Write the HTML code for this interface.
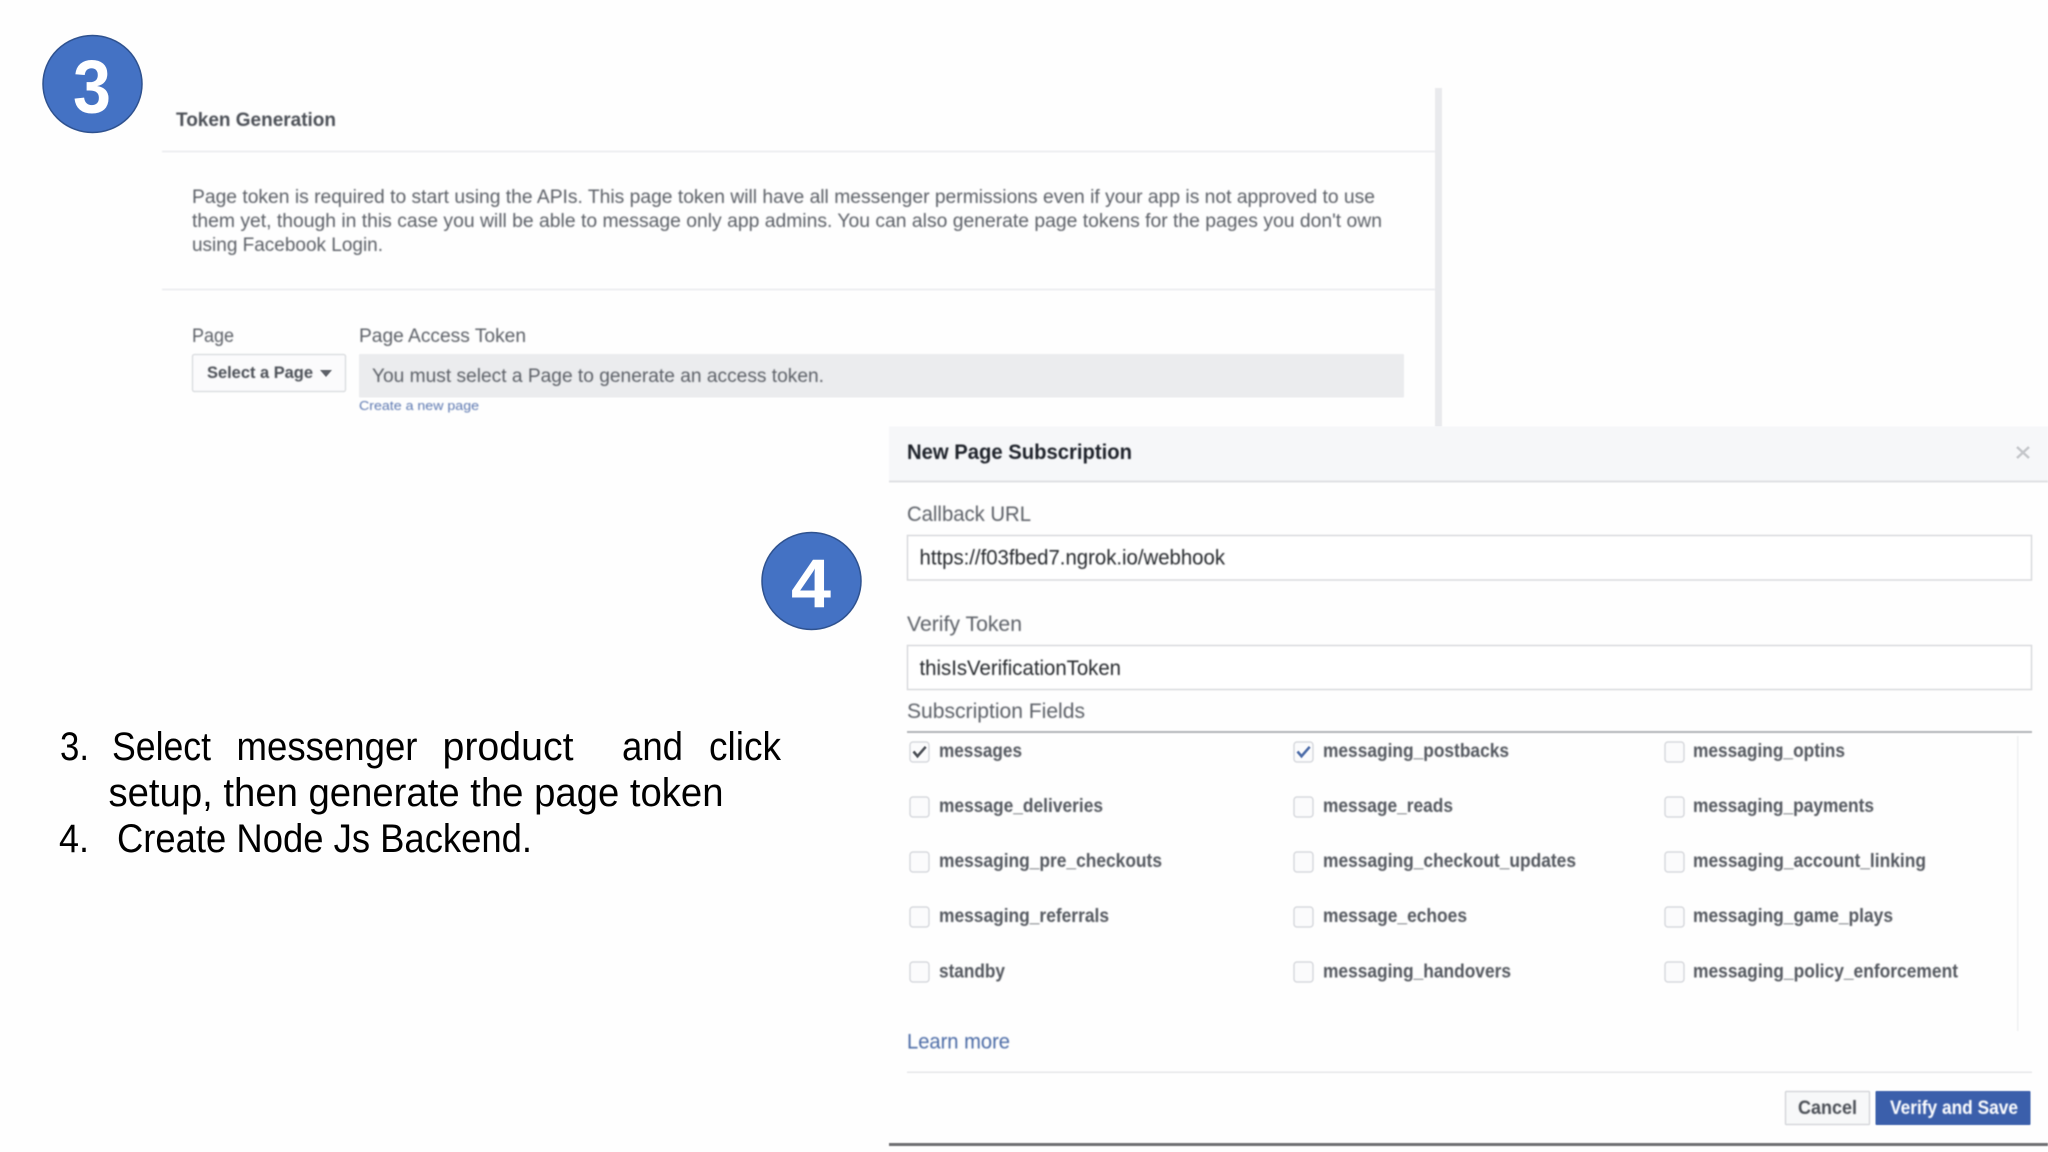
<!DOCTYPE html>
<html><head><meta charset="utf-8"><title>Token Generation and New Page Subscription</title>
<style>
html,body{margin:0;padding:0;background:#fefefe;width:2048px;height:1152px;overflow:hidden}
svg{display:block;font-family:"Liberation Sans",Arial,sans-serif}
.soft{filter:blur(.7px)}
.f18{font-size:19px;fill:#5c6067}
.b18{font-size:19px;font-weight:700;fill:#4b4f56}
.f20{font-size:21px;fill:#5c6067}
.inp{font-size:21px;fill:#25282c}
.fld{font-size:19px;font-weight:700;fill:#54585f}
.cb{fill:#fbfbfc;stroke:#d8dade;stroke-width:1.500}
.big{font-size:40px;fill:#000}
</style></head><body>
<svg width="2048" height="1152" viewBox="0 0 2048 1152" xmlns="http://www.w3.org/2000/svg">
<rect width="2048" height="1152" fill="#fefefe"/>

<!-- Token panel -->
<g style="filter:blur(.5px)">
<rect x="1435" y="88" width="7" height="339" fill="#e9eaed"/>
<rect x="162" y="150.500" width="1273" height="2" fill="#eeeff1"/>
<rect x="162" y="288.500" width="1273" height="2" fill="#eeeff1"/>
<rect x="192.500" y="354.500" width="153" height="37" rx="2" fill="#fbfbfc" stroke="#dddfe2" stroke-width="1.500"/>
<rect x="359" y="354" width="1045" height="43.500" rx="1" fill="#ebecee"/>
<path d="M320 370h12l-6 7z" fill="#5d6168"/>
</g>

<g class="soft">
<text x="176" y="126" class="b18" textLength="160" lengthAdjust="spacingAndGlyphs">Token Generation</text>
<text x="192" y="203" class="f18" textLength="1183" lengthAdjust="spacingAndGlyphs">Page token is required to start using the APIs. This page token will have all messenger permissions even if your app is not approved to use</text>
<text x="192" y="227" class="f18" textLength="1190" lengthAdjust="spacingAndGlyphs">them yet, though in this case you will be able to message only app admins. You can also generate page tokens for the pages you don't own</text>
<text x="192" y="251" class="f18" textLength="191" lengthAdjust="spacingAndGlyphs">using Facebook Login.</text>
<text x="192" y="342" class="f18" textLength="42" lengthAdjust="spacingAndGlyphs">Page</text>
<text x="359" y="342" class="f18" textLength="167" lengthAdjust="spacingAndGlyphs">Page Access Token</text>
<text x="207" y="378" class="b18" style="font-size:17px" textLength="106" lengthAdjust="spacingAndGlyphs">Select a Page</text>
<text x="372" y="382" class="f18" textLength="452" lengthAdjust="spacingAndGlyphs">You must select a Page to generate an access token.</text>
<text x="359" y="410" style="font-size:13px;fill:#5b77b0" textLength="120" lengthAdjust="spacingAndGlyphs">Create a new page</text>
</g>

<!-- Left copy -->
<g style="filter:blur(.3px)">
<text x="60" y="760" class="big" textLength="29" lengthAdjust="spacingAndGlyphs">3.</text>
<text x="112" y="760" class="big" textLength="99" lengthAdjust="spacingAndGlyphs">Select</text>
<text x="236.500" y="760" class="big" textLength="181" lengthAdjust="spacingAndGlyphs">messenger</text>
<text x="442.500" y="760" class="big" textLength="131" lengthAdjust="spacingAndGlyphs">product</text>
<text x="622" y="760" class="big" textLength="61" lengthAdjust="spacingAndGlyphs">and</text>
<text x="709" y="760" class="big" textLength="72" lengthAdjust="spacingAndGlyphs">click</text>
<text x="108.500" y="806" class="big" textLength="615" lengthAdjust="spacingAndGlyphs">setup, then generate the page token</text>
<text x="59" y="852" class="big" textLength="30" lengthAdjust="spacingAndGlyphs">4.</text>
<text x="117" y="852" class="big" textLength="415" lengthAdjust="spacingAndGlyphs">Create Node Js Backend.</text>
</g>

<!-- Modal -->
<rect x="889" y="426.500" width="1159" height="720" fill="#fefefe"/>
<g style="filter:blur(.5px)">
<rect x="889" y="426.500" width="1159" height="55" fill="#f6f7f9"/>
<rect x="889" y="480.500" width="1159" height="2" fill="#e0e1e4"/>
<rect x="889" y="1143" width="1159" height="3" fill="#6e6f72"/>
<path d="M2017 447l12 11M2029 447l-12 11" stroke="#c4c6ca" stroke-width="2.500" fill="none"/>
<rect x="907.500" y="535.500" width="1124" height="44.500" fill="#fff" stroke="#d9dadd" stroke-width="1.500"/>
<rect x="907.500" y="645.500" width="1124" height="44" fill="#fff" stroke="#d9dadd" stroke-width="1.500"/>
<rect x="907" y="731" width="1125" height="2" fill="#b3b5b8"/>
<rect x="2017" y="736" width="1.500" height="295" fill="#eff0f1"/>
<rect x="907" y="1071.500" width="1125" height="1.500" fill="#e6e7e9"/>
</g>

<g class="soft">
<text x="907" y="459" style="font-size:21px;font-weight:700;fill:#1d2129" textLength="225" lengthAdjust="spacingAndGlyphs">New Page Subscription</text>
<text x="907" y="521" class="f20" textLength="124" lengthAdjust="spacingAndGlyphs">Callback URL</text>
<text x="919.500" y="564.500" class="inp" textLength="305.500" lengthAdjust="spacingAndGlyphs">https://f03fbed7.ngrok.io/webhook</text>
<text x="907" y="631" class="f20" textLength="115" lengthAdjust="spacingAndGlyphs">Verify Token</text>
<text x="919.500" y="675" class="inp" textLength="201.500" lengthAdjust="spacingAndGlyphs">thisIsVerificationToken</text>
<text x="907" y="718" class="f20" textLength="178" lengthAdjust="spacingAndGlyphs">Subscription Fields</text>

<text x="939" y="757" class="fld" textLength="83" lengthAdjust="spacingAndGlyphs">messages</text>
<text x="1323" y="757" class="fld" textLength="186" lengthAdjust="spacingAndGlyphs">messaging_postbacks</text>
<text x="1693" y="757" class="fld" textLength="152" lengthAdjust="spacingAndGlyphs">messaging_optins</text>
<text x="939" y="812" class="fld" textLength="164" lengthAdjust="spacingAndGlyphs">message_deliveries</text>
<text x="1323" y="812" class="fld" textLength="130" lengthAdjust="spacingAndGlyphs">message_reads</text>
<text x="1693" y="812" class="fld" textLength="181" lengthAdjust="spacingAndGlyphs">messaging_payments</text>
<text x="939" y="867" class="fld" textLength="223" lengthAdjust="spacingAndGlyphs">messaging_pre_checkouts</text>
<text x="1323" y="867" class="fld" textLength="253" lengthAdjust="spacingAndGlyphs">messaging_checkout_updates</text>
<text x="1693" y="867" class="fld" textLength="233" lengthAdjust="spacingAndGlyphs">messaging_account_linking</text>
<text x="939" y="922" class="fld" textLength="170" lengthAdjust="spacingAndGlyphs">messaging_referrals</text>
<text x="1323" y="922" class="fld" textLength="144" lengthAdjust="spacingAndGlyphs">message_echoes</text>
<text x="1693" y="922" class="fld" textLength="200" lengthAdjust="spacingAndGlyphs">messaging_game_plays</text>
<text x="939" y="977.500" class="fld" textLength="66" lengthAdjust="spacingAndGlyphs">standby</text>
<text x="1323" y="977.500" class="fld" textLength="188" lengthAdjust="spacingAndGlyphs">messaging_handovers</text>
<text x="1693" y="977.500" class="fld" textLength="265" lengthAdjust="spacingAndGlyphs">messaging_policy_enforcement</text>

<text x="907" y="1048.500" style="font-size:21px;fill:#4a6aa5" textLength="103" lengthAdjust="spacingAndGlyphs">Learn more</text>
</g>

<!-- Checkboxes -->
<g style="filter:blur(.6px)">
<rect class="cb" x="910" y="742" width="19" height="20" rx="3"/>
<rect class="cb" x="1294" y="742" width="19" height="20" rx="3"/>
<rect class="cb" x="1665" y="742" width="19" height="20" rx="3"/>
<rect class="cb" x="910" y="797" width="19" height="20" rx="3"/>
<rect class="cb" x="1294" y="797" width="19" height="20" rx="3"/>
<rect class="cb" x="1665" y="797" width="19" height="20" rx="3"/>
<rect class="cb" x="910" y="852" width="19" height="20" rx="3"/>
<rect class="cb" x="1294" y="852" width="19" height="20" rx="3"/>
<rect class="cb" x="1665" y="852" width="19" height="20" rx="3"/>
<rect class="cb" x="910" y="907" width="19" height="20" rx="3"/>
<rect class="cb" x="1294" y="907" width="19" height="20" rx="3"/>
<rect class="cb" x="1665" y="907" width="19" height="20" rx="3"/>
<rect class="cb" x="910" y="962" width="19" height="20" rx="3"/>
<rect class="cb" x="1294" y="962" width="19" height="20" rx="3"/>
<rect class="cb" x="1665" y="962" width="19" height="20" rx="3"/>
<path d="M913.500 751.500l4 4.700 8.200-9.400" fill="none" stroke="#4b4f56" stroke-width="2.600"/>
<path d="M1297.500 751.500l4 4.700 8.200-9.400" fill="none" stroke="#4b6ba8" stroke-width="2.600"/>
</g>

<!-- Buttons -->
<g style="filter:blur(.4px)">
<rect x="1785.500" y="1091.500" width="84" height="33" rx="1" fill="#f7f8f9" stroke="#d6d8db" stroke-width="1.500"/>
<rect x="1875.500" y="1091" width="155" height="34" rx="1" fill="#3b5fab"/>
</g>
<g class="soft">
<text x="1798" y="1114" class="b18" textLength="59" lengthAdjust="spacingAndGlyphs">Cancel</text>
<text x="1890" y="1114" style="font-size:19px;font-weight:700;fill:#fff" textLength="128" lengthAdjust="spacingAndGlyphs">Verify and Save</text>
</g>

<!-- Step badges -->
<ellipse cx="92.500" cy="84" rx="49.500" ry="48.500" fill="#4472c4" stroke="#2f528f" stroke-width="1.500"/>
<ellipse cx="811.500" cy="581" rx="49.500" ry="48.500" fill="#4472c4" stroke="#2f528f" stroke-width="1.500"/>
<text x="73" y="112.500" style="font-size:75px;font-weight:700;fill:#fff" textLength="38" lengthAdjust="spacingAndGlyphs">3</text>
<text x="791" y="607" style="font-size:69px;font-weight:700;fill:#fff" textLength="40" lengthAdjust="spacingAndGlyphs">4</text>
</svg>
</body></html>
